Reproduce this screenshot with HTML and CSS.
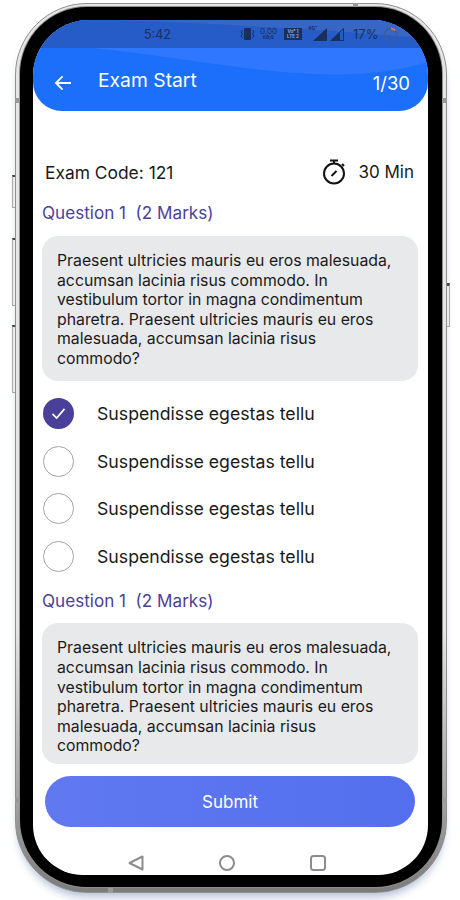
FILE: index.html
```html
<!DOCTYPE html>
<html lang="en">
<head>
<meta charset="utf-8">
<title>Exam Start</title>
<link rel="stylesheet" href="styles.css">
</head>
<body>
<div class="phone">
  <span class="side-btn btn-a"></span>
  <span class="side-btn btn-b"></span>
  <span class="side-btn btn-c"></span>
  <span class="side-btn btn-d"></span>
  <span class="band band-top"></span>
  <span class="band band-left"></span>
  <span class="band band-right"></span>
  <span class="band band-left-low"></span>
  <span class="band band-right-low"></span>
  <span class="band band-bottom"></span>
  <div class="bezel">
    <div class="screen">
      <header class="header">
        <svg class="wave" viewBox="0 0 395 91" preserveAspectRatio="none" aria-hidden="true">
          <path d="M0 0H395V42C350 56 300 57 240 51C180 45 120 34 60 28H0Z" fill="#2f77ff"/>
          <path d="M50 0C100 0 130 2 164 3C250 8 330 12 395 19V0Z" fill="#4a86fa"/>
        </svg>
        <div class="status">
          <span class="time">5:42</span>
          <svg class="ic-vib" viewBox="0 0 15 14" aria-hidden="true"><rect x="4" y="1" width="7" height="12" rx="1" fill="#1c2f5c"/><path d="M2.500 3 1 5 2.500 7 1 9 2.500 11M12.500 3 14 5 12.500 7 14 9 12.500 11" fill="none" stroke="#1c2f5c" stroke-width="1"/></svg>
          <span class="speed"><b>0.00</b><i>KB/S</i></span>
          <span class="volte"><span>Vo⁰ 1</span><span>LTE 2</span></span>
          <span class="net"><small>4G⁺</small><svg viewBox="0 0 14 13" aria-hidden="true"><path d="M14 0V13H0Z" fill="#1c2f5c"/></svg></span>
          <svg class="ic-sig" viewBox="0 0 14 13" aria-hidden="true"><path d="M13.500 .500V12.500H1Z" fill="none" stroke="#1c2f5c" stroke-width="1"/><path d="M10 4V13H0Z" fill="#1c2f5c"/></svg>
          <span class="batt">17%</span>
          <svg class="ic-ring" viewBox="0 0 16 16" aria-hidden="true"><circle cx="8" cy="8" r="6.500" fill="none" stroke="#3c5d9f" stroke-width="1.800"/><path d="M8.500 1.500A6.500 6.500 0 0 1 13 3.800" fill="none" stroke="#f0744f" stroke-width="1.800"/></svg>
        </div>
        <div class="titlebar">
          <svg class="ic-back" viewBox="0 0 20 18" aria-hidden="true"><path d="M19 9H2M9.500 1.500 2 9l7.500 7.500" fill="none" stroke="#fff" stroke-width="2"/></svg>
          <h1 class="title">Exam Start</h1>
          <span class="count">1/30</span>
        </div>
      </header>

      <main class="content">
        <div class="meta">
          <span>Exam Code: 121</span>
          <span class="timer">
            <svg viewBox="0 0 24 26" aria-hidden="true"><circle cx="12" cy="14.500" r="10" fill="none" stroke="#111" stroke-width="2"/><path d="M8 1.500H16M12 1.500V4.500M20 5l2 2" fill="none" stroke="#111" stroke-width="2"/><path d="M9.500 17 14.500 12" fill="none" stroke="#111" stroke-width="2"/></svg>
            30 Min
          </span>
        </div>

        <h2 class="qlabel">Question 1&nbsp; (2 Marks)</h2>
        <p class="qcard">Praesent ultricies mauris eu eros malesuada, accumsan lacinia risus commodo. In vestibulum tortor in magna condimentum pharetra. Praesent ultricies mauris eu eros malesuada, accumsan lacinia risus commodo?</p>

        <ul class="options">
          <li class="option"><span class="radio checked"><svg viewBox="0 0 16 14" aria-hidden="true"><path d="M1.500 7.500 6 12 14.500 2" fill="none" stroke="#fff" stroke-width="1.800"/></svg></span>Suspendisse egestas tellu</li>
          <li class="option"><span class="radio"></span>Suspendisse egestas tellu</li>
          <li class="option"><span class="radio"></span>Suspendisse egestas tellu</li>
          <li class="option"><span class="radio"></span>Suspendisse egestas tellu</li>
        </ul>

        <h2 class="qlabel second">Question 1&nbsp; (2 Marks)</h2>
        <p class="qcard cut">Praesent ultricies mauris eu eros malesuada, accumsan lacinia risus commodo. In vestibulum tortor in magna condimentum pharetra. Praesent ultricies mauris eu eros malesuada, accumsan lacinia risus commodo?</p>

        <button class="submit" type="button">Submit</button>
      </main>

      <nav class="navbar">
        <svg viewBox="0 0 16 16" aria-hidden="true"><path d="M14.500 1.500V14.500L1.500 8Z" fill="none" stroke="#8c8c8c" stroke-width="2" stroke-linejoin="round"/></svg>
        <svg viewBox="0 0 16 16" aria-hidden="true"><circle cx="8" cy="8" r="7" fill="none" stroke="#8c8c8c" stroke-width="2"/></svg>
        <svg viewBox="0 0 16 16" aria-hidden="true"><rect x="1" y="1" width="14" height="14" rx="2.500" fill="none" stroke="#8c8c8c" stroke-width="2"/></svg>
      </nav>
    </div>
  </div>
</div>
</body>
</html>
```
FILE: styles.css
```css
* { box-sizing: border-box; }
html, body { margin: 0; background: #fff; }
body {
  height: 900px;
  overflow: hidden;
  padding: 3px 13px 0 15px;
  font-family: Inter, "Liberation Sans", sans-serif;
  color: #1a1a1a;
}
.phone {
  position: relative;
  width: 432px;
  height: 890px;
  padding: 3px 4px 5px 4px;
  border: 1px solid #8f8f8f;
  border-radius: 72px;
  background: linear-gradient(180deg, #e6e6e6 0%, #e6e6e6 70%, #9a9a9a 92%, #7c7c7c 100%);
  box-shadow: 0 7px 9px -3px rgba(70, 100, 160, .4);
}
.side-btn { position: absolute; left: -4px; width: 3px; background: #ececec; border: 1px solid #a8a8a8; border-top: 2px solid #444; border-right: 0; }
.btn-a { top: 171px; height: 33px; }
.btn-b { top: 234px; height: 68px; }
.btn-c { top: 321px; height: 68px; }
.btn-d { left: auto; right: -4px; top: 279px; height: 44px; border: 1px solid #a8a8a8; border-top: 3px solid #444; border-left: 0; }
.band { position: absolute; background: #999; }
.band-top { left: 337px; top: -1px; width: 5px; height: 4px; }
.band-left { left: -1px; top: 94px; width: 5px; height: 5px; }
.band-right { right: -1px; top: 94px; width: 5px; height: 5px; }
.band-left-low { left: -1px; top: 794px; width: 5px; height: 5px; }
.band-right-low { right: -1px; top: 794px; width: 5px; height: 5px; }
.band-bottom { left: 92px; bottom: -1px; width: 5px; height: 5px; }
.bezel {
  height: 100%;
  padding: 13px 14px 12px 13px;
  border-radius: 67px;
  border: 0;
  background: #000;
  box-shadow: 0 0 0 1px #8f8f8f;
}
.screen {
  position: relative;
  display: flex;
  flex-direction: column;
  height: 855px;
  overflow: hidden;
  border-radius: 56px 56px 50px 50px;
  background: #fff;
}
.header {
  position: relative;
  height: 91px;
  flex: none;
  overflow: hidden;
  border-radius: 0 0 29px 29px;
  background: #1b6ffb;
  color: #fff;
}
.wave { position: absolute; inset: 0; width: 100%; height: 100%; }
.status {
  position: relative;
  display: flex;
  align-items: center;
  height: 28px;
  padding-left: 111px;
  background: rgba(20, 40, 90, .34);
  color: #1c2f5c;
}
.time { width: 96px; font-size: 12.500px; }
.ic-vib { width: 15px; height: 14px; margin-right: 4px; }
.speed { display: flex; flex-direction: column; align-items: center; width: 19px; margin-right: 6px; }
.speed b { font-weight: 400; font-size: 8px; line-height: 8px; }
.speed i { font-style: normal; font-weight: 700; font-size: 4.500px; line-height: 6px; }
.volte { display: flex; flex-direction: column; width: 18px; height: 12px; margin-right: 5px; padding-top: 1px; background: #1c2f5c; color: #8ea9d8; font-size: 4.500px; font-weight: 700; line-height: 5px; text-align: center; white-space: nowrap; }
.net { position: relative; display: block; width: 20px; height: 13px; margin-right: 3px; }
.net small { position: absolute; left: 1px; top: -3px; font-size: 5px; font-weight: 700; }
.net svg { position: absolute; right: 0; top: 0; width: 14px; height: 13px; }
.ic-sig { width: 14px; height: 13px; margin-right: 9px; }
.batt { width: 30px; font-size: 13px; }
.ic-ring { width: 15px; height: 15px; }
.titlebar {
  position: relative;
  display: flex;
  align-items: center;
  height: 63px;
  padding: 0 18px 0 21px;
}
.ic-back { width: 18px; height: 16px; flex: none; margin-top: 7px; }
.title { flex: 1; margin: 0 0 0 26px; font-size: 19.300px; font-weight: 400; }
.count { font-size: 18.500px; margin-top: 7px; }
.content {
  flex: 1;
  min-height: 0;
  padding: 0 10px 0 9px;
}
.meta {
  display: flex;
  align-items: center;
  justify-content: space-between;
  height: 28px;
  margin: 47px 4px 0 3px;
  font-size: 17.400px;
}
.timer { display: flex; align-items: center; gap: 12px; font-size: 17px; }
.timer svg { width: 24px; height: 26px; }
.qlabel { margin: 15px 0 0; height: 22px; line-height: 24px; font-size: 17.100px; font-weight: 400; color: #4b3f98; }
.qcard {
  height: 145px;
  margin: 13px 0 0;
  padding: 15px 15px 0;
  overflow: hidden;
  border-radius: 16px;
  background: #e8e9eb;
  font-size: 15.800px;
  line-height: 19.600px;
}
.qcard.cut { height: 141px; margin-top: 12px; }
.options { margin: 9px 0 0; padding: 0; list-style: none; }
.option { display: flex; align-items: center; height: 47.600px; padding-left: 1px; font-size: 17.700px; }
.radio { display: flex; align-items: center; justify-content: center; width: 31px; height: 31px; margin-right: 23px; border: 1px solid #a5a5a5; border-radius: 50%; }
.radio.checked { background: #4a3f99; border: 0; }
.radio svg { width: 15px; height: 13px; }
.qlabel.second { margin-top: 9px; }
.submit {
  display: block;
  width: 370px;
  height: 51px;
  margin: 12px 0 0 3px;
  border: 0;
  border-radius: 26px;
  background: linear-gradient(90deg, #6079f1, #546fee);
  color: #fff;
  font: 400 17px Inter, "Liberation Sans", sans-serif;
}
.navbar {
  display: flex;
  justify-content: center;
  align-items: center;
  gap: 75px;
  flex: none;
  height: 48px;
  padding: 23px 8px 0 0;
}
.navbar svg { width: 16px; height: 16px; }
```
